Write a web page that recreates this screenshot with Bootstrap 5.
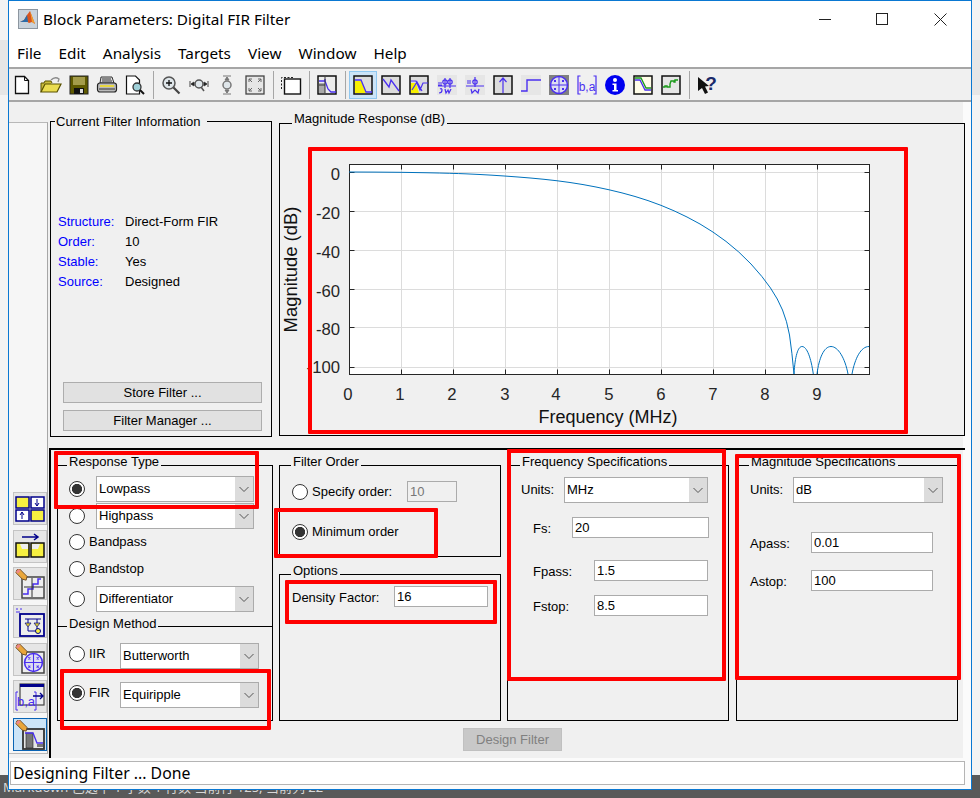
<!DOCTYPE html>
<html lang="en">
<head>
<meta charset="utf-8">
<title>Block Parameters: Digital FIR Filter</title>
<link href="https://cdn.jsdelivr.net/npm/bootstrap@5.3.0/dist/css/bootstrap.min.css" rel="stylesheet">
<style>
html,body{height:798px;overflow:hidden}
body{position:relative;margin:0;font-family:"Liberation Sans",Arial,sans-serif;font-size:13px;line-height:1.2;color:#000;background:linear-gradient(#f3f3f3 40px,#e6e6e6 40px 95px,#f3f3f3 95px)}
.deskbar{height:23px;background:#595959;color:#d8d8d8;font:13px/5px "Noto Sans","Noto Sans CJK SC",sans-serif;padding:10px 0 0 3px;white-space:nowrap}
.win{position:absolute;left:8px;top:0;width:964px;height:790px;border:1px solid #0a78d2;background:#fbfbfb}
.ttl{height:35px;background:#fff;font:15.300px "Noto Sans",sans-serif;padding:1px 0 0 9px}
.ttl .nm{margin-left:5px}
.wbtn{position:absolute;top:6px;width:45px;height:24px}
.wb1{left:794px}.wb2{left:851px}.wb3{left:909px}
.mnu{height:31px;background:#fff;font:15.300px "Noto Sans",sans-serif;padding:3px 0 0 8px}
.mnu a{color:#000;text-decoration:none;margin-right:17px}
.tbar{height:35px;border-top:2px solid #a6a6a6;border-bottom:2px solid #a6a6a6;background:#f0f0f0}
.tbi{width:28px;height:28px;padding:0;border:1px solid transparent;border-radius:0;display:flex;align-items:center;justify-content:center}
.tbi.active,.tbi.active:hover{background:#cce4f7;border-color:#90c8f0}
.tsep{width:8px;display:flex;justify-content:center}
.tsep::before{content:"";width:1px;height:28px;background:#a6a6a6}
.mainp{height:656px;width:954px;background:#f0f0f0}
.sidep{width:39px;height:632px;margin-top:20px;background:#f6f6f6;border-top:1px solid #b8b8b8;border-right:1px solid #a6a6a6;border-bottom:1px solid #b8b8b8;padding:0 0 2px 4px;gap:4.660px}
.sbi{width:34px;height:33px;padding:0;border:1px solid #c4c4c4;border-radius:0;background:#e6e6e6;display:flex;align-items:center;justify-content:center}
.sbi.active,.sbi.active:hover{background:#cce4f7;border-color:#0a64b4}
.gbox{position:relative;border:1px solid #000;background:#f0f0f0}
.gt{position:absolute;top:-12px;left:11px;background:#f0f0f0;padding:0 2px;white-space:nowrap;line-height:15px}
.gt0{top:-8px;left:4px;padding:0 6px 0 1px}
.gt1{top:-13px;left:12px}
.gtl{left:9px}
.gtr{left:12px}
.infoB{width:222px;height:316px;margin:19px 0 0 2px;padding:90px 0 5px 7px}
.magB{width:686px;height:313px;margin:21px 0 0 7px}
.magB svg{display:block}
.irow{height:20px;line-height:20px}
.ilb{width:67px;color:#0000ff}
.gap7{gap:7px}
.gbtn{width:199px;height:21px;margin-left:5px;padding:0;border:1px solid #adadad;border-radius:0;background:#e1e1e1;color:#000;font-size:13px;line-height:18px;--bs-btn-hover-bg:#e1e1e1}
.panel{margin:11px 0 0 1px;width:916px;height:310px;border-top:2px solid #000;border-left:2px solid #000;padding:15px 0 0 6px}
.c1{width:216px;height:256px;padding:10px 0 0 11px}
.c2{width:222px}
.ml6{margin-left:6px}.ml7{margin-left:7px}
.ord{height:92px;padding:15px 0 0 12px}
.opt{height:147px;margin-top:17px;padding:11px 0 0 12px}
.sp{padding:11px 0 0 13px;height:256px}
.form-check-input.rd{width:16px;height:16px;margin:0;flex:none;background-color:#fff;border:1px solid #333;box-shadow:none}
.form-check-input.rd:checked[type=radio]{background-color:#fff;border-color:#333;background-image:radial-gradient(circle,#333 0 4.800px,transparent 5.400px)}
.form-select.cb{height:26px;padding:0 18px 0 2px;font-size:13px;color:#000;border:1px solid #ababab;border-radius:0;line-height:24px;box-shadow:none;background:url("data:image/svg+xml,%3Csvg xmlns='http://www.w3.org/2000/svg' viewBox='0 0 18 24'%3E%3Cpath fill='none' stroke='%23555' d='M4.500 10l4.500 4.500 4.500-4.500'/%3E%3C/svg%3E") right center/18px 100% no-repeat,linear-gradient(#dcdcdc,#dcdcdc) right center/18px 100% no-repeat,#fff}
.form-control.ed{height:21px;padding:0 2px;font-size:13px;color:#000;border:1px solid #ababab;border-radius:0;line-height:17px;box-shadow:none}
.form-control.ed:disabled{background:#f0f0f0;color:#777}
.r{height:26px}
.rl{margin-bottom:4px}
.lrw{width:51px;gap:4px}
.w158{width:158px}.w139{width:139px}.w144{width:144px}.w150{width:150px}
.gp11{gap:11px}
.mt1x{margin-top:1px}.mt4x{margin-top:4px}
.dm{margin:14px 0 0 -11px;border-top:1px solid #000;position:relative;padding:16px 0 0 11px}
.dm .gt{top:-11px;left:9px}
.firrow{margin-top:13px}
.fl{width:43px}
.e21{height:21px}
.lfs{width:39px;margin-left:12px}
.lfp{width:61px;margin-left:12px}
.lms{width:61px}
.fw137{width:137px}.fw114{width:114px}.fw122{width:122px}.fw94{width:94px}.fw50{width:50px}
.lso{width:115px;gap:4px}
.lde{width:102px}
.mt14{margin-top:14px}.mt22{margin-top:22px}.mt29{margin-top:29px}.mt17{margin-top:17px}.mt19{margin-top:19px}
.shd{padding-top:2px}
.dfb,.dfb:disabled{display:block;width:99px;height:23px;margin:7px 0 0 406px;padding:0;border:1px solid #c0c0c0;border-radius:0;background:#c8c8c8;color:#808080;font-size:13px;opacity:1}
.stat{height:24px;width:955px;margin:3px 0 0 1px;background:#fff;border:1px solid #b4b4b4;font:15.800px "Noto Sans",sans-serif;line-height:22px;padding-left:2px}
.rbx{position:absolute;border:4px solid #f00;border-radius:1px;pointer-events:none}
.rb1{left:308px;top:147px;width:600px;height:287px}
.rb2{left:54px;top:451px;width:205px;height:58px}
.rb3{left:60px;top:669px;width:211px;height:61px}
.rb4{left:274px;top:508px;width:164px;height:50px}
.rb5{left:285px;top:580px;width:212px;height:44px}
.rb6{left:507px;top:449px;width:219px;height:232px}
.rb7{left:735px;top:454px;width:226px;height:226px}
.defs{position:absolute;width:0;height:0}
.plt text{font-family:"Liberation Sans",Arial,sans-serif;font-size:16.700px;fill:#262626}
.plt .yl text{text-anchor:end}
.plt .xl text{text-anchor:middle}
.plt .ax{font-size:18px;fill:#111;text-anchor:middle}
.plt .ay{font-size:18.400px}
</style>
</head>
<body class="d-flex flex-column">
<svg class="defs" aria-hidden="true">
<symbol id="pen" viewBox="0 0 14 14"><path d="M2 1l3-1 8 8-1 4-4-1-7-7z" fill="#e9a63a" stroke="#6a4a20"/><path d="M1 3l3-3 2 2-3 3z" fill="#e88"/></symbol>
<symbol id="ring" viewBox="0 0 20 20"><circle cx="10" cy="10" r="8.500" fill="#dcdcf0" stroke="#4a2ff0" stroke-width="1.500"/><path d="M10 1v18M1 10h18" stroke="#4a2ff0"/><path d="M5 5l2 2M7 5l-2 2M13 5l2 2M15 5l-2 2M5 13l2 2M7 13l-2 2M13 13l2 2M15 13l-2 2" stroke="#4a2ff0"/></symbol>
</svg>

<div class="deskbar mt-auto">Markdown 已选中 1 字数 1 行数 当前行 125, 当前列 22</div>

<div class="win d-flex flex-column">
  <div class="ttl d-flex align-items-center position-relative">
    <svg width="20" height="20" viewBox="0 0 20 20"><rect x=".5" y=".5" width="19" height="19" fill="#c9d3dc" stroke="#8c96a0"/><path d="M2 13l4-2 3-5 3-4 5 13-3-2-3 1-3-2z" fill="#d9541e"/><path d="M2 13l4-2 3-5 1 7-3 0z" fill="#2a6ca8"/><path d="M12 2l5 13-3-2z" fill="#f0a030"/></svg>
    <span class="nm">Block Parameters: Digital FIR Filter</span>
    <svg class="wbtn wb1" viewBox="0 0 45 24"><path d="M16 12.500h12" stroke="#222"/></svg>
    <svg class="wbtn wb2" viewBox="0 0 45 24"><rect x="16.500" y="6.500" width="11" height="11" fill="none" stroke="#222"/></svg>
    <svg class="wbtn wb3" viewBox="0 0 45 24"><path d="M16.500 6.500l12 12M28.500 6.500l-12 12" stroke="#222"/></svg>
  </div>
  <nav class="mnu d-flex align-items-center">
    <a href="#">File</a><a href="#">Edit</a><a href="#">Analysis</a><a href="#">Targets</a><a href="#">View</a><a href="#">Window</a><a href="#">Help</a>
  </nav>
  <div class="tbar d-flex align-items-center">
    <button type="button" class="btn tbi" aria-label="New"><svg width="20" height="20" viewBox="0 0 20 20"><path d="M2.500 1.500h9l4 4v13h-13z" fill="#fff" stroke="#111" stroke-width="1.300"/><path d="M11.500 1.500v4h4" fill="none" stroke="#111"/></svg></button>
    <button type="button" class="btn tbi" aria-label="Open"><svg width="22" height="20" viewBox="0 0 22 20"><path d="M1 17V8h3l1-2h6l1 2" fill="#c9bb3c" stroke="#5a5200"/><path d="M1 17l4-8h16l-4 8z" fill="#eadc50" stroke="#5a5200" stroke-width="1.200"/><path d="M11 5q4-4 8-1l-1 3" fill="none" stroke="#8a8a8a" stroke-width="1.300"/></svg></button>
    <button type="button" class="btn tbi" aria-label="Save"><svg width="20" height="20" viewBox="0 0 20 20"><rect x="1" y="1" width="18" height="18" fill="#5f5a00" stroke="#222"/><rect x="4" y="2" width="12" height="8" fill="#a49c4a"/><rect x="5" y="13" width="10" height="6" fill="#111"/><rect x="11" y="14" width="3" height="4" fill="#ddd"/></svg></button>
    <button type="button" class="btn tbi" aria-label="Print"><svg width="22" height="20" viewBox="0 0 22 20"><path d="M5 2h11l2 6H4z" fill="#ddd" stroke="#333"/><path d="M6 4h9M6 6h10" stroke="#333"/><rect x="1.500" y="8" width="19" height="9" rx="2.500" fill="#bbb" stroke="#222" stroke-width="1.200"/><path d="M4 11h14" stroke="#e8d840" stroke-width="2"/><path d="M3 14h16" stroke="#333"/></svg></button>
    <button type="button" class="btn tbi" aria-label="Print preview"><svg width="22" height="20" viewBox="0 0 22 20"><path d="M2.500 1h9l4 4v14h-13z" fill="#fff" stroke="#111" stroke-width="1.200"/><circle cx="13" cy="12" r="4" fill="#9fd0d8" stroke="#333" stroke-width="1.300"/><path d="M16 15l4 4" stroke="#111" stroke-width="2"/></svg></button>
    <span class="tsep"></span>
    <button type="button" class="btn tbi" aria-label="Zoom in"><svg width="20" height="20" viewBox="0 0 20 20"><circle cx="8" cy="8" r="6" fill="#dfe6ea" stroke="#555" stroke-width="1.500"/><path d="M5 8h6M8 5v6" stroke="#111" stroke-width="1.300"/><path d="M12.500 12.500l6 6" stroke="#444" stroke-width="2.200"/></svg></button>
    <button type="button" class="btn tbi" aria-label="Zoom X"><svg width="20" height="20" viewBox="0 0 20 20"><circle cx="10" cy="9" r="4" fill="#dfe6ea" stroke="#555" stroke-width="1.500"/><path d="M1 6v6M19 6v6M2 9l3-2v4zM18 9l-3-2v4z" stroke="#444"/><path d="M12 12l3 4" stroke="#555" stroke-width="1.500"/></svg></button>
    <button type="button" class="btn tbi" aria-label="Zoom Y"><svg width="20" height="20" viewBox="0 0 20 20"><circle cx="10" cy="10" r="4" fill="#dfe6ea" stroke="#777" stroke-width="1.500"/><path d="M6 1h8M6 19h8M10 2l-2 3h4zM10 18l-2-3h4z" stroke="#777" fill="#777"/></svg></button>
    <button type="button" class="btn tbi" aria-label="Full view"><svg width="20" height="20" viewBox="0 0 20 20"><rect x="1" y="1" width="18" height="18" fill="#e6e6e6" stroke="#444" stroke-width="1.300"/><path d="M4 4l3 3M4 4h3M4 4v3M16 4l-3 3M16 4h-3M16 4v3M4 16l3-3M4 16h3M4 16v-3M16 16l-3-3M16 16h-3M16 16v-3" stroke="#666"/></svg></button>
    <span class="tsep"></span>
    <button type="button" class="btn tbi" aria-label="New plot"><svg width="22" height="20" viewBox="0 0 22 20"><rect x="4.500" y="4" width="16" height="15" fill="#fff" stroke="#111" stroke-width="1.400"/><path d="M1.500 14V2.500h12" fill="none" stroke="#222" stroke-dasharray="2 1.500"/></svg></button>
    <span class="tsep"></span>
    <button type="button" class="btn tbi" aria-label="Specifications"><svg width="20" height="20" viewBox="0 0 20 20"><rect x="1" y="1" width="18" height="18" fill="#ececec" stroke="#111" stroke-width="1.500"/><rect x="2" y="8" width="6" height="10" fill="#aaa"/><path d="M2 6h6v-2M8 6l3 8 3 3h5" fill="none" stroke="#4a2ff0" stroke-width="1.300"/><path d="M8 2v16M2 10h6" stroke="#333"/></svg></button>
    <span class="tsep"></span>
    <button type="button" class="btn tbi active" aria-label="Magnitude"><svg width="20" height="20" viewBox="0 0 20 20"><rect x="1" y="1" width="18" height="18" fill="#dcdcdc" stroke="#111" stroke-width="1.500"/><path d="M2 6h6l5 12H2z" fill="#f7f000"/><path d="M2 5h6l5 12h6" fill="none" stroke="#4a2ff0" stroke-width="1.300"/></svg></button>
    <button type="button" class="btn tbi" aria-label="Phase"><svg width="20" height="20" viewBox="0 0 20 20"><rect x="1" y="1" width="18" height="18" fill="#dcdcdc" stroke="#111" stroke-width="1.500"/><path d="M2 4l6 8 2-7 8 11" fill="none" stroke="#4a2ff0" stroke-width="1.300"/></svg></button>
    <button type="button" class="btn tbi" aria-label="Magnitude and phase"><svg width="20" height="20" viewBox="0 0 20 20"><rect x="1" y="1" width="18" height="18" fill="#dcdcdc" stroke="#111" stroke-width="1.500"/><path d="M2 8h5l3 10H2z" fill="#f7f000"/><path d="M2 6h5l4 9 3-7h5M3 15l5-8 5 9" fill="none" stroke="#4a2ff0" stroke-width="1.200"/></svg></button>
    <button type="button" class="btn tbi" aria-label="Group delay"><svg width="20" height="20" viewBox="0 0 20 20"><rect width="20" height="20" fill="#e6e6e6"/><g fill="none" stroke="#4a2ff0" stroke-width="1.200"><path d="M1 8h4M1 10h4M8 3v10M13 3v10M1 11h18"/><circle cx="8" cy="7" r="2.200"/><circle cx="13" cy="7" r="2.200"/><path d="M3 14q2-1 2 1 0 3-3 3M8 14l1 4 2-3 1 3 2-4"/></g></svg></button>
    <button type="button" class="btn tbi" aria-label="Phase delay"><svg width="20" height="20" viewBox="0 0 20 20"><rect width="20" height="20" fill="#e6e6e6"/><g fill="none" stroke="#4a2ff0" stroke-width="1.200"><path d="M2 6h4M2 8h4M10 2v10M1 11h18"/><circle cx="10" cy="7" r="2.200"/><path d="M6 14l1 4 3-3 3 3 1-4"/></g></svg></button>
    <button type="button" class="btn tbi" aria-label="Impulse response"><svg width="20" height="20" viewBox="0 0 20 20"><rect x="1" y="1" width="18" height="18" fill="#dcdcdc" stroke="#111" stroke-width="1.500"/><path d="M10 18V3M6.500 7L10 3l3.500 4" fill="none" stroke="#4a2ff0" stroke-width="1.200"/></svg></button>
    <button type="button" class="btn tbi" aria-label="Step response"><svg width="20" height="20" viewBox="0 0 20 20"><rect width="20" height="20" fill="#e6e6e6"/><path d="M0 16h6V5h14" fill="none" stroke="#4a2ff0" stroke-width="1.400"/></svg></button>
    <button type="button" class="btn tbi" aria-label="Pole zero"><svg width="20" height="20" viewBox="0 0 20 20"><rect width="20" height="20" fill="#808080"/><use href="#ring" width="20" height="20"/></svg></button>
    <button type="button" class="btn tbi" aria-label="Coefficients"><svg width="20" height="20" viewBox="0 0 20 20"><path d="M3.500 1H1v18h2.500M16.500 1H19v18h-2.500" fill="none" stroke="#4a2ff0" stroke-width="1.200"/><text x="10" y="16" text-anchor="middle" font-size="12" font-family="Liberation Sans" fill="#4a2ff0">b,a</text></svg></button>
    <button type="button" class="btn tbi" aria-label="Information"><svg width="20" height="20" viewBox="0 0 20 20"><circle cx="10" cy="10" r="10" fill="#0000f0"/><circle cx="10" cy="5" r="2" fill="#fff"/><path d="M7.500 8.500h4v6.500h1.500v1.500H7.500V15H9v-5H7.500z" fill="#fff"/></svg></button>
    <button type="button" class="btn tbi" aria-label="Round-off noise"><svg width="20" height="20" viewBox="0 0 20 20"><rect x="1" y="1" width="18" height="18" fill="#fffde8" stroke="#111" stroke-width="1.500"/><path d="M2 5h5l5 10h6" fill="none" stroke="#4a2ff0" stroke-width="1.300"/><path d="M2 3h6l5 10h5" fill="none" stroke="#1a9a1a" stroke-width="1.300"/></svg></button>
    <button type="button" class="btn tbi" aria-label="Quantized response"><svg width="20" height="20" viewBox="0 0 20 20"><rect x="1" y="1" width="18" height="18" fill="#e6e6e6" stroke="#111" stroke-width="1.500"/><path d="M2 12h2v-1h2v1h3V9l1-3h3v1h1v-2h3" fill="none" stroke="#1a9a1a" stroke-width="1.400"/></svg></button>
    <span class="tsep"></span>
    <button type="button" class="btn tbi" aria-label="Help"><svg width="24" height="22" viewBox="0 0 24 22"><path d="M3 3l11 9-4 .5 3 6-3 1.500-3-6-4 3z" fill="#111"/><text x="16" y="16" text-anchor="middle" font-size="19" font-weight="700" font-family="Liberation Sans" fill="#1a2a6a">?</text></svg></button>
  </div>

  <div class="mainp d-flex align-items-start">
    <div class="sidep d-flex flex-column justify-content-end">
      <button type="button" class="btn sbi" aria-label="Transform"><svg width="30" height="30" viewBox="0 0 30 30"><g fill="#fff" stroke="#00008b" stroke-width="1.500"><rect x="1" y="3" width="13" height="11" fill="#f7f040"/><rect x="16" y="3" width="13" height="11"/><rect x="1" y="16" width="13" height="11"/><rect x="16" y="16" width="13" height="11" fill="#f7f040"/></g><path d="M22 5v7M7 25v-7M20 9l2 3 2-3M5 21l2-3 2 3" fill="none" stroke="#00008b"/></svg></button>
      <button type="button" class="btn sbi" aria-label="Resample"><svg width="30" height="30" viewBox="0 0 30 30"><path d="M7 6h16M19 3l4 3-4 3" fill="none" stroke="#00008b" stroke-width="1.500"/><rect x="1" y="12" width="13" height="14" fill="#f7f040" stroke="#111" stroke-width="1.500"/><rect x="16" y="12" width="13" height="14" fill="#f7f040" stroke="#111" stroke-width="1.500"/><path d="M2 13h3l2 5h6v-5H2zM17 18h6l2-5h3v-0H17z" fill="#eee"/></svg></button>
      <button type="button" class="btn sbi" aria-label="Pole zero editor"><svg width="30" height="30" viewBox="0 0 30 30"><rect x="7" y="8" width="22" height="21" fill="#eee" stroke="#444" stroke-width="1.500"/><path d="M8 25h5v-5h5v-5h5v-5h3" fill="none" stroke="#4a2ff0" stroke-width="1.500"/><path d="M17 9v19M9 18h19" stroke="#333"/><use href="#pen" x="0" y="0" width="13" height="13"/></svg></button>
      <button type="button" class="btn sbi" aria-label="Realize model"><svg width="30" height="30" viewBox="0 0 30 30"><rect x="5" y="7" width="24" height="22" fill="#eee" stroke="#00008b" stroke-width="1.800"/><path d="M10 12h16M13 12v5M22 12v5M13 20v4h8M22 20v2" fill="none" stroke="#00008b"/><path d="M10 16h6l-3 4zM19 16h6l-3 4z" fill="#d9c930" stroke="#00008b" stroke-width=".7"/><circle cx="23" cy="24" r="2.500" fill="#f7f040" stroke="#00008b"/><path d="M1 2h2M1 5h4M5 2h2" stroke="#4a2ff0"/></svg></button>
      <button type="button" class="btn sbi" aria-label="Pole zero"><svg width="30" height="30" viewBox="0 0 30 30"><rect x="7" y="8" width="22" height="21" fill="#eee" stroke="#444" stroke-width="1.500"/><use href="#ring" x="8" y="8" width="21" height="21"/><use href="#pen" x="0" y="0" width="13" height="13"/></svg></button>
      <button type="button" class="btn sbi" aria-label="Import"><svg width="30" height="30" viewBox="0 0 30 30"><rect x="5" y="2" width="24" height="21" fill="#eee" stroke="#444" stroke-width="1.200"/><rect x="5" y="2" width="24" height="3" fill="#00008b"/><path d="M3 10H1v18h2M19 10h2v18h-2" fill="none" stroke="#4a2ff0"/><text x="11" y="24" text-anchor="middle" font-size="13" font-family="Liberation Sans" fill="#4a2ff0">b,a</text><path d="M18 14h10M25 11l3 3-3 3" fill="none" stroke="#00008b" stroke-width="1.300"/></svg></button>
      <button type="button" class="btn sbi active" aria-label="Design filter"><svg width="30" height="30" viewBox="0 0 30 30"><rect x="8" y="9" width="21" height="20" fill="#e6e6e6" stroke="#333" stroke-width="1.800"/><rect x="11" y="13" width="7" height="15" fill="#777" stroke="#222" stroke-width=".6"/><path d="M10 13h8l4 10h6" fill="none" stroke="#4a2ff0" stroke-width="1.300"/><path d="M22 24h6v3h-6z" fill="#777"/><use href="#pen" x="0" y="0" width="13" height="13"/></svg></button>
    </div>

    <div class="flex-grow-0">
      <div class="d-flex align-items-start">
        <div class="gbox infoB d-flex flex-column">
          <span class="gt gt0">Current Filter Information</span>
          <div class="d-flex irow"><span class="ilb">Structure:</span><span>Direct-Form FIR</span></div>
          <div class="d-flex irow"><span class="ilb">Order:</span><span>10</span></div>
          <div class="d-flex irow"><span class="ilb">Stable:</span><span>Yes</span></div>
          <div class="d-flex irow"><span class="ilb">Source:</span><span>Designed</span></div>
          <div class="mt-auto d-flex flex-column gap7">
            <button type="button" class="btn gbtn">Store Filter ...</button>
            <button type="button" class="btn gbtn">Filter Manager ...</button>
          </div>
        </div>
        <div class="gbox magB">
          <span class="gt gt1">Magnitude Response (dB)</span>
          <svg class="plt" width="640" height="310" viewBox="0 0 640 310">
            <rect x="69.500" y="40.500" width="520" height="210" fill="#fff"/>
            <path d="M121.500 41v209M173.500 41v209M225.500 41v209M277.500 41v209M329.500 41v209M381.500 41v209M433.500 41v209M485.500 41v209M537.500 41v209M70 48.500h519M70 87.500h519M70 126.500h519M70 165.500h519M70 203.500h519M70 243.500h519" stroke="#dcdcdc"/>
            <path d="M121.500 40.500v5M173.500 40.500v5M225.500 40.500v5M277.500 40.500v5M329.500 40.500v5M381.500 40.500v5M433.500 40.500v5M485.500 40.500v5M537.500 40.500v5M121.500 250.500v-5M173.500 250.500v-5M225.500 250.500v-5M277.500 250.500v-5M329.500 250.500v-5M381.500 250.500v-5M433.500 250.500v-5M485.500 250.500v-5M537.500 250.500v-5M69.500 48.500h5M69.500 87.500h5M69.500 126.500h5M69.500 165.500h5M69.500 203.500h5M69.500 243.500h5M589.500 48.500h-5M589.500 87.500h-5M589.500 126.500h-5M589.500 165.500h-5M589.500 203.500h-5M589.500 243.500h-5" stroke="#262626"/>
            <rect x="69.500" y="40.500" width="520" height="210" fill="none" stroke="#262626"/>
            <g fill="none" stroke="#0072bd">
              <path d="M69 48L95 48.100Q121 48.200 147 48.750Q173 49.300 186 49.850Q199 50.400 212 51.200Q225 52 238 53Q251 54 264 55.300Q277 56.600 290 58.500Q303 60.400 316 63Q329 65.600 342 68.900Q355 72.200 368 76.600Q381 81 394 86.800Q407 92.600 420 100Q433 107.500 446 117.400Q459 127.300 471 140Q483 153 490.500 164Q498 175 502.500 186Q507 197 509.500 211Q512 228 514 250"/>
              <path d="M514 250C515 232 518 222.500 522 222.500C527 222.500 531 234 533.300 250M537 250C539 234 544 222.500 551 222.500C558 222.500 565 234 568 250M572 250C575 234 581 222.500 589 222.500"/>
            </g>
            <g class="yl"><text x="60" y="56">0</text><text x="60" y="94.500">-20</text><text x="60" y="134">-40</text><text x="60" y="173">-60</text><text x="60" y="210.500">-80</text><text x="60" y="249">-100</text></g>
            <g class="xl"><text x="68" y="276">0</text><text x="120" y="276">1</text><text x="172" y="276">2</text><text x="225" y="276">3</text><text x="276" y="276">4</text><text x="329" y="276">5</text><text x="381" y="276">6</text><text x="433" y="276">7</text><text x="485" y="276">8</text><text x="537" y="276">9</text></g>
            <text class="ax" x="328" y="299">Frequency (MHz)</text>
            <text class="ax ay" transform="translate(17 145.500) rotate(-90)">Magnitude (dB)</text>
          </svg>
        </div>
      </div>

      <div class="panel">
        <div class="d-flex align-items-start">
          <div class="gbox c1">
            <span class="gt gtl">Response Type</span>
            <div class="d-flex align-items-center r gp11"><input class="form-check-input rd rl" type="radio" name="rt" checked aria-label="Lowpass"><select class="form-select cb w158" aria-label="Lowpass"><option>Lowpass</option></select></div>
            <div class="d-flex align-items-center r gp11 mt1x"><input class="form-check-input rd rl" type="radio" name="rt" aria-label="Highpass"><select class="form-select cb w158" aria-label="Highpass"><option>Highpass</option></select></div>
            <div class="d-flex align-items-center r gap-1"><input class="form-check-input rd" type="radio" name="rt" aria-label="Bandpass"><span>Bandpass</span></div>
            <div class="d-flex align-items-center r gap-1 mt1x"><input class="form-check-input rd" type="radio" name="rt" aria-label="Bandstop"><span>Bandstop</span></div>
            <div class="d-flex align-items-center r gp11 mt4x"><input class="form-check-input rd rl" type="radio" name="rt" aria-label="Differentiator"><select class="form-select cb w158" aria-label="Differentiator"><option>Differentiator</option></select></div>
            <div class="dm">
              <span class="gt">Design Method</span>
              <div class="d-flex align-items-center r"><span class="d-flex align-items-center rl lrw"><input class="form-check-input rd" type="radio" name="dm" aria-label="IIR"><span>IIR</span></span><select class="form-select cb w139" aria-label="Butterworth"><option>Butterworth</option></select></div>
              <div class="d-flex align-items-center r firrow"><span class="d-flex align-items-center rl lrw"><input class="form-check-input rd" type="radio" name="dm" checked aria-label="FIR"><span>FIR</span></span><select class="form-select cb w139" aria-label="Equiripple"><option>Equiripple</option></select></div>
            </div>
          </div>
          <div class="c2 ml6">
            <div class="gbox ord">
              <span class="gt">Filter Order</span>
              <div class="d-flex align-items-center e21"><span class="d-flex align-items-center lso"><input class="form-check-input rd" type="radio" name="fo" aria-label="Specify order"><span>Specify order:</span></span><input class="form-control ed fw50" type="text" value="10" disabled aria-label="Order"></div>
              <div class="d-flex align-items-center e21 gap-1 mt19"><input class="form-check-input rd" type="radio" name="fo" checked aria-label="Minimum order"><span>Minimum order</span></div>
            </div>
            <div class="gbox opt">
              <span class="gt">Options</span>
              <div class="d-flex align-items-center e21"><span class="lde shd">Density Factor:</span><input class="form-control ed fw94" type="text" value="16" aria-label="Density Factor"></div>
            </div>
          </div>
          <div class="gbox c2 sp ml6">
            <span class="gt gtr">Frequency Specifications</span>
            <div class="d-flex align-items-center r"><span class="fl">Units:</span><select class="form-select cb w144" aria-label="Frequency units"><option>MHz</option></select></div>
            <div class="d-flex align-items-center e21 mt14"><span class="lfs shd">Fs:</span><input class="form-control ed fw137" type="text" value="20" aria-label="Fs"></div>
            <div class="d-flex align-items-center e21 mt22"><span class="lfp shd">Fpass:</span><input class="form-control ed fw114" type="text" value="1.5" aria-label="Fpass"></div>
            <div class="d-flex align-items-center e21 mt14"><span class="lfp shd">Fstop:</span><input class="form-control ed fw114" type="text" value="8.5" aria-label="Fstop"></div>
          </div>
          <div class="gbox c2 sp ml7">
            <span class="gt gtr">Magnitude Specifications</span>
            <div class="d-flex align-items-center r"><span class="fl">Units:</span><select class="form-select cb w150" aria-label="Magnitude units"><option>dB</option></select></div>
            <div class="d-flex align-items-center e21 mt29"><span class="lms shd">Apass:</span><input class="form-control ed fw122" type="text" value="0.01" aria-label="Apass"></div>
            <div class="d-flex align-items-center e21 mt17"><span class="lms shd">Astop:</span><input class="form-control ed fw122" type="text" value="100" aria-label="Astop"></div>
          </div>
        </div>
        <button type="button" class="btn dfb" disabled>Design Filter</button>
      </div>
    </div>
  </div>
  <div class="stat">Designing Filter ... Done</div>
</div>

<div class="rbx rb1"></div>
<div class="rbx rb2"></div>
<div class="rbx rb3"></div>
<div class="rbx rb4"></div>
<div class="rbx rb5"></div>
<div class="rbx rb6"></div>
<div class="rbx rb7"></div>
<script src="https://cdn.jsdelivr.net/npm/bootstrap@5.3.0/dist/js/bootstrap.bundle.min.js"></script>
</body>
</html>
